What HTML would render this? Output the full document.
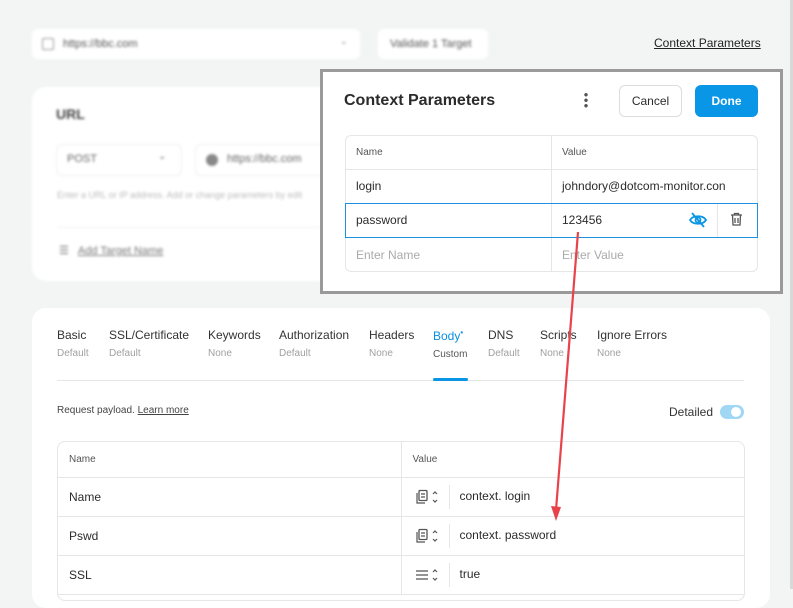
<!DOCTYPE html>
<html><head><style>
*{box-sizing:border-box;margin:0;padding:0}
body{width:793px;height:589px;overflow:hidden;background:#f3f5f5;font-family:"Liberation Sans",Arial,sans-serif;color:#2b2b2b;position:relative}
.abs{position:absolute}
.blur{filter:blur(1.2px)}
.card{background:#fff;border-radius:14px}
.tab{position:absolute;top:328px;font-size:12px;color:#333}
.tab small{display:block;font-size:10px;color:#a0a0a0;margin-top:6px}
.t td{border-right:1px solid #e6e6e6;border-bottom:1px solid #e6e6e6}
.ic{display:inline-block;vertical-align:middle}
.sep{display:inline-block;border-left:1px solid #e6e6e6;height:24px;vertical-align:middle;margin:0 10px 0 10px}
</style></head><body>
<div class="abs" style="right:0;top:0;width:3px;height:589px;background:#d8d8d8"></div>
<div class="blur">
<div class="abs card" style="left:32px;top:29px;width:328px;height:30px;border-radius:6px"></div>
<div class="abs" style="left:42px;top:38px;width:12px;height:12px;border:1.5px solid #999;border-radius:2px"></div>
<div class="abs" style="left:63px;top:38px;font-size:11px;color:#555">https://bbc.com</div>
<div class="abs" style="left:340px;top:36px;font-size:9px;color:#888">⌄</div>
<div class="abs card" style="left:378px;top:29px;width:110px;height:30px;border-radius:6px"></div>
<div class="abs" style="left:390px;top:38px;font-size:11px;color:#555">Validate 1 Target</div>
<div class="abs card" style="left:32px;top:87px;width:300px;height:194px"></div>
<div class="abs" style="left:56px;top:106px;font-size:14px;font-weight:bold;color:#444">URL</div>
<div class="abs" style="left:56px;top:144px;width:126px;height:32px;border:1px solid #eee;border-radius:6px"></div>
<div class="abs" style="left:67px;top:153px;font-size:11px;color:#666">POST</div>
<div class="abs" style="left:158px;top:151px;font-size:10px;color:#777">⌄</div>
<div class="abs" style="left:195px;top:144px;width:140px;height:32px;border:1px solid #eee;border-radius:6px"></div>
<div class="abs" style="left:206px;top:154px;width:12px;height:12px;border-radius:50%;background:#888"></div>
<div class="abs" style="left:227px;top:153px;font-size:11px;color:#666">https://bbc.com</div>
<div class="abs" style="left:57px;top:190px;font-size:9px;color:#bbb">Enter a URL or IP address. Add or change parameters by edit</div>
<div class="abs" style="left:57px;top:227px;width:263px;height:1px;background:#eee"></div>
<div class="abs" style="left:59px;top:244px;font-size:11px;color:#777">☰ <u style="margin-left:6px">Add Target Name</u></div>
</div>
<div class="abs" style="left:654px;top:36px;font-size:12px;color:#222;text-decoration:underline">Context Parameters</div>

<div class="abs card" style="left:32px;top:308px;width:738px;height:300px"></div>
<div class="tab" style="left:57px">Basic<small>Default</small></div>
<div class="tab" style="left:109px">SSL/Certificate<small>Default</small></div>
<div class="tab" style="left:208px">Keywords<small>None</small></div>
<div class="tab" style="left:279px">Authorization<small>Default</small></div>
<div class="tab" style="left:369px">Headers<small>None</small></div>
<div class="tab" style="left:433px;color:#0a8ee0">Body<sup style="font-size:8px">•</sup><small style="color:#555">Custom</small></div>
<div class="tab" style="left:488px">DNS<small>Default</small></div>
<div class="tab" style="left:540px">Scripts<small>None</small></div>
<div class="tab" style="left:597px">Ignore Errors<small>None</small></div>
<div class="abs" style="left:57px;top:380px;width:687px;height:1px;background:#e6e6e6"></div>
<div class="abs" style="left:433px;top:378px;width:35px;height:3px;background:#0a96e6;border-radius:2px"></div>
<div class="abs" style="left:57px;top:405px;font-size:10px;color:#444">Request payload. <u>Learn more</u></div>
<div class="abs" style="left:669px;top:405px;font-size:12px;color:#333">Detailed</div>
<div class="abs" style="left:720px;top:405px;width:24px;height:14px;border-radius:7px;background:#9fd7f5"></div>
<div class="abs" style="left:731px;top:407px;width:10px;height:10px;border-radius:50%;background:#fff"></div>
<div class="abs" style="left:57px;top:441px;width:688px;height:160px;border:1px solid #e6e6e6;border-radius:8px;overflow:hidden">
<table class="t" style="border-collapse:collapse;width:100%;font-size:12px">
<tr style="height:35px"><td style="width:343px;padding-left:11px;font-size:10px;color:#555">Name</td><td style="padding-left:11px;font-size:10px;color:#555;border-right:0">Value</td></tr>
<tr style="height:39px"><td style="padding-left:11px">Name</td><td style="border-right:0;padding-left:13px"><svg class="ic" width="24" height="16" viewBox="0 0 24 16"><rect x="4" y="1.5" width="8" height="10" rx="1" fill="none" stroke="#555" stroke-width="1.3"/><path d="M2 4V14H10M6 5H10M6 8H10" fill="none" stroke="#555" stroke-width="1.2"/><path d="M18 5L20 3L22 5M18 11L20 13L22 11" fill="none" stroke="#555" stroke-width="1.2"/></svg><span class="sep"></span>context. login</td></tr>
<tr style="height:39px"><td style="padding-left:11px">Pswd</td><td style="border-right:0;padding-left:13px"><svg class="ic" width="24" height="16" viewBox="0 0 24 16"><rect x="4" y="1.5" width="8" height="10" rx="1" fill="none" stroke="#555" stroke-width="1.3"/><path d="M2 4V14H10M6 5H10M6 8H10" fill="none" stroke="#555" stroke-width="1.2"/><path d="M18 5L20 3L22 5M18 11L20 13L22 11" fill="none" stroke="#555" stroke-width="1.2"/></svg><span class="sep"></span>context. password</td></tr>
<tr style="height:39px"><td style="padding-left:11px">SSL</td><td style="border-right:0;padding-left:13px"><svg class="ic" width="24" height="16" viewBox="0 0 24 16"><path d="M1 4H13M1 8H13M1 12H13" stroke="#555" stroke-width="1.3"/><path d="M18 5L20 3L22 5M18 11L20 13L22 11" fill="none" stroke="#555" stroke-width="1.2"/></svg><span class="sep"></span>true</td></tr>
</table></div>

<div class="abs" style="left:320px;top:69px;width:463px;height:225px;border:3px solid #9a9a9a;background:#fff"></div>
<div class="abs" style="left:344px;top:92px;font-size:16px;font-weight:bold;color:#2b2b2b">Context Parameters</div>
<div class="abs" style="left:584px;top:92px;width:4px;height:16px;background:radial-gradient(circle,#555 1.5px,transparent 2px) 0 0/4px 5.5px"></div>
<div class="abs" style="left:619px;top:85px;width:63px;height:32px;border:1px solid #ddd;border-radius:6px;font-size:12px;text-align:center;line-height:30px">Cancel</div>
<div class="abs" style="left:695px;top:85px;width:63px;height:32px;background:#0a96e6;border-radius:6px;font-size:12px;font-weight:bold;color:#fff;text-align:center;line-height:32px">Done</div>
<div class="abs" style="left:345px;top:135px;width:413px;height:137px;border:1px solid #e6e6e6;border-radius:6px"></div>
<div class="abs" style="left:551px;top:136px;width:1px;height:135px;background:#e6e6e6"></div>
<div class="abs" style="left:346px;top:169px;width:411px;height:1px;background:#e6e6e6"></div>
<div class="abs" style="left:346px;top:237px;width:411px;height:1px;background:#e6e6e6"></div>
<div class="abs" style="left:717px;top:204px;width:1px;height:33px;background:#e6e6e6"></div>
<div class="abs" style="left:345px;top:203px;width:413px;height:35px;border:1px solid #1e90e0;z-index:2"></div>
<div class="abs" style="left:356px;top:147px;font-size:10px;color:#555">Name</div>
<div class="abs" style="left:562px;top:147px;font-size:10px;color:#555">Value</div>
<div class="abs" style="left:356px;top:179px;font-size:12px">login</div>
<div class="abs" style="left:562px;top:179px;font-size:12px;white-space:nowrap">johndory@dotcom-monitor.con</div>
<div class="abs" style="left:356px;top:213px;font-size:12px">password</div>
<div class="abs" style="left:562px;top:213px;font-size:12px">123456</div>
<svg class="abs" style="left:689px;top:212px" width="18" height="16" viewBox="0 0 18 16"><path d="M1 8C4 3 14 3 17 8C14 13 4 13 1 8Z" fill="none" stroke="#0a96e6" stroke-width="1.8"/><circle cx="9" cy="8" r="2.5" fill="none" stroke="#0a96e6" stroke-width="1.8"/><path d="M3 1L15 15" stroke="#0a96e6" stroke-width="1.8"/></svg>
<svg class="abs" style="left:730px;top:212px" width="13" height="14" viewBox="0 0 13 14"><path d="M1 3H12M4.5 3V1.5H8.5V3M2.5 3L3 13H10L10.5 3M5 6V11M8 6V11" fill="none" stroke="#555" stroke-width="1.3"/></svg>
<div class="abs" style="left:356px;top:248px;font-size:12px;color:#aaa">Enter Name</div>
<div class="abs" style="left:562px;top:248px;font-size:12px;color:#aaa">Enter Value</div>

<svg class="abs" style="left:0;top:0;z-index:3" width="793" height="589"><line x1="578" y1="232" x2="556" y2="510" stroke="#e8434a" stroke-width="2.2"/><path d="M551 506L556 521L561 507Z" fill="#e8434a"/></svg>
</body></html>
